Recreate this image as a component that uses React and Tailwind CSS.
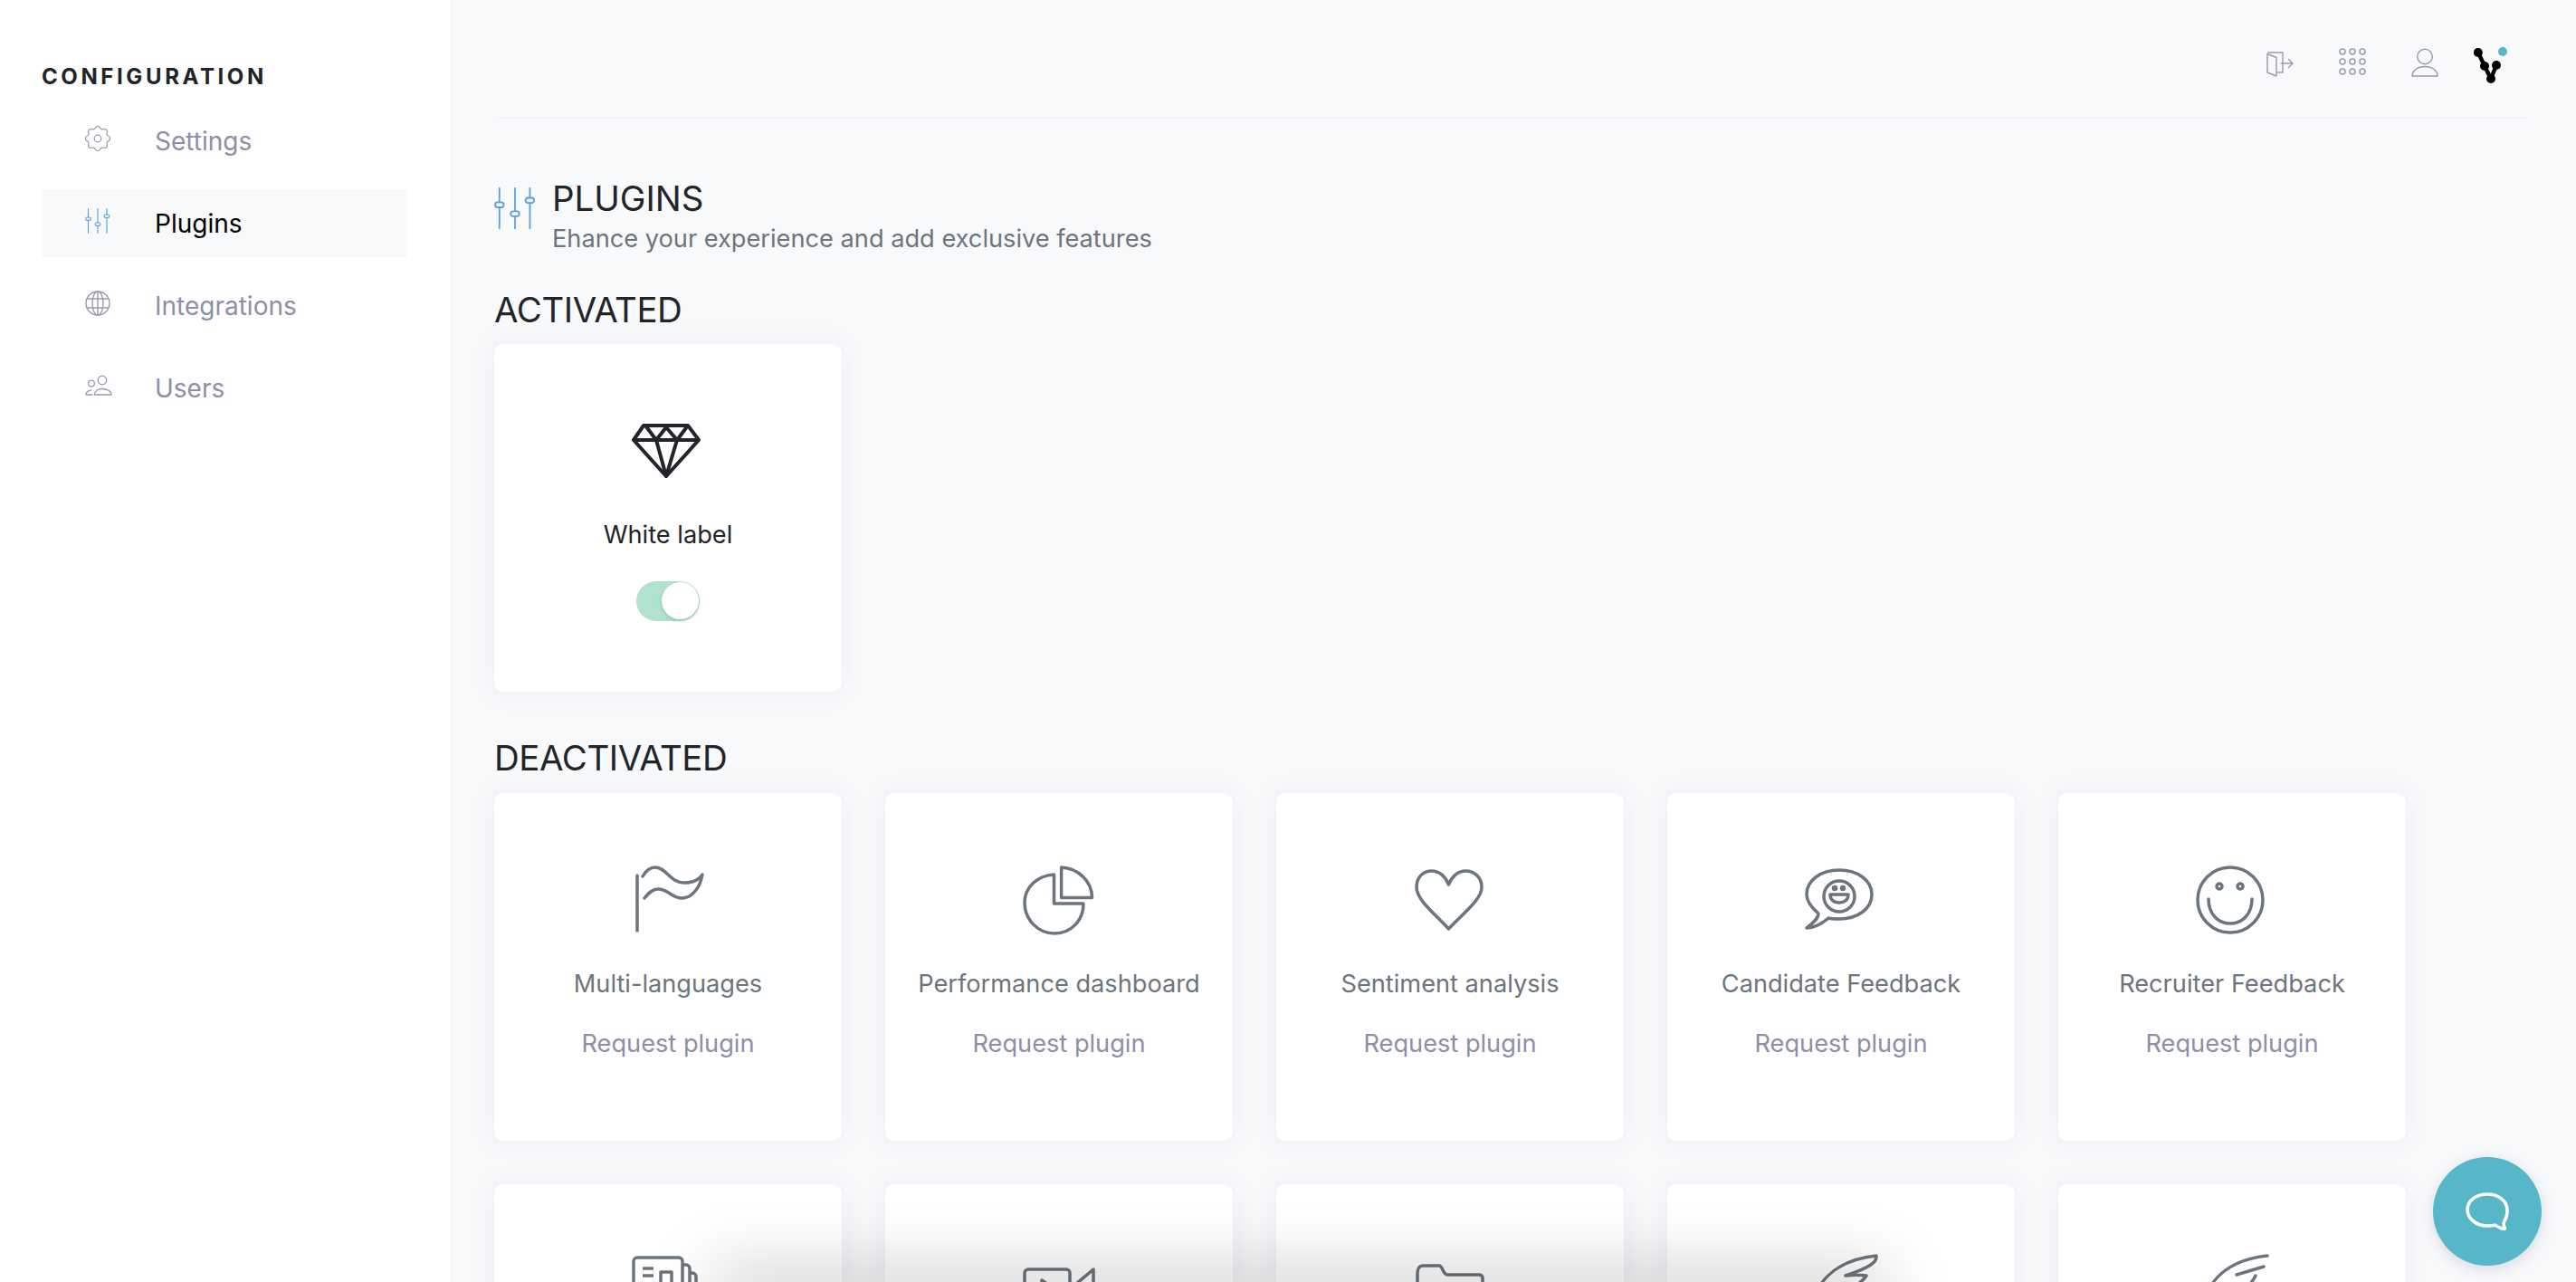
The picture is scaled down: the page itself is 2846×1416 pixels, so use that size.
const gearPath = Array.from({ length: 96 }, (_, i) => {
    const a = (i / 96) * Math.PI * 2;
    const r = 12.4 + 1.3 * Math.cos(8 * a);
    return `${(14 + r * Math.cos(a)).toFixed(2)} ${(14 + r * Math.sin(a)).toFixed(2)}`;
}).join('L');

const Sliders = ({ className }) => (
    <svg viewBox="0 0 28 28" fill="none" stroke="currentColor" strokeWidth="1.1" strokeLinecap="round" className={className}>
        <path d="M3.5 0.5v9.500M3.5 13.500v14M14 0.5v15M14 19.500v8M24 0.5v6.500M24 10.500v17" />
        <rect x="0.6" y="10" width="5.8" height="3.4" rx="1.7" />
        <rect x="11.1" y="16" width="5.8" height="3.4" rx="1.7" />
        <rect x="21.1" y="7" width="5.8" height="3.4" rx="1.7" />
    </svg>
);

const Gear = ({ className }) => (
    <svg viewBox="0 0 28 28" fill="none" stroke="currentColor" strokeWidth="1.2" strokeLinejoin="round" className={className}>
        <circle cx="14" cy="14" r="3.8" />
        <path d={`M${gearPath}z`} />
    </svg>
);

const Globe = ({ className }) => (
    <svg viewBox="0 0 28 28" fill="none" stroke="currentColor" strokeWidth="1.4" className={className}>
        <circle cx="14" cy="14" r="13" />
        <ellipse cx="14" cy="14" rx="6" ry="13" />
        <path d="M14 1v26M2.2 9h23.6M2.2 19h23.6" />
    </svg>
);

const Users = ({ className }) => (
    <svg viewBox="0 0 30 24" fill="none" stroke="currentColor" strokeWidth="1.3" strokeLinejoin="round" className={className}>
        <circle cx="19" cy="6" r="4.8" />
        <circle cx="7" cy="9.5" r="3.4" />
        <path d="M10.500 22c0-4 3.500-6.500 8.500-6.500s10 2.500 10 6.500z" />
        <path d="M8.500 22H1c0-2.500 2.500-5 6-5" />
    </svg>
);

const Door = ({ className }) => (
    <svg viewBox="0 0 30 28" fill="none" stroke="currentColor" strokeWidth="1.4" strokeLinejoin="round" strokeLinecap="round" className={className}>
        <path d="M1 2.500V23l10 4V6.500zM2 1h16v22h-7" />
        <path d="M16 13h13M24.500 8.500 29 13l-4.500 4.500" />
    </svg>
);

const Grid = ({ className }) => (
    <svg viewBox="0 0 30 30" fill="none" stroke="currentColor" strokeWidth="1.5" className={className}>
        <circle cx="4" cy="4" r="3" /><circle cx="15" cy="4" r="3" /><circle cx="26" cy="4" r="3" />
        <circle cx="4" cy="15" r="3" /><circle cx="15" cy="15" r="3" /><circle cx="26" cy="15" r="3" />
        <circle cx="4" cy="26" r="3" /><circle cx="15" cy="26" r="3" /><circle cx="26" cy="26" r="3" />
    </svg>
);

const Person = ({ className }) => (
    <svg viewBox="0 0 30 32" fill="none" stroke="currentColor" strokeWidth="1.4" strokeLinejoin="round" className={className}>
        <circle cx="15" cy="9.500" r="8.300" />
        <path d="M1 31c0-6 6-10.500 14-10.500S29 25 29 31z" />
    </svg>
);

const Logo = ({ className }) => (
    <svg viewBox="0 0 30 39" fill="currentColor" stroke="currentColor" className={className}>
        <path d="M5 5l7 15 7 14M25 19l-6 15" fill="none" strokeWidth="4.500" />
        <circle cx="4.800" cy="5" r="5" stroke="none" />
        <circle cx="12" cy="20" r="5" stroke="none" />
        <circle cx="25" cy="19" r="5" stroke="none" />
        <circle cx="19" cy="34" r="5" stroke="none" />
    </svg>
);

const Diamond = ({ className }) => (
    <svg viewBox="0 0 76 60" fill="none" stroke="currentColor" strokeWidth="4" strokeLinejoin="round" className={className}>
        <path d="M13 2h49l12 16-36 40L2 18z" />
        <path d="M2 18h72M15 2l12 16L38 4l12 14L62 2M27 18 38 58l12-40" />
    </svg>
);

const Flag = ({ className }) => (
    <svg viewBox="0 0 76 76" fill="none" stroke="currentColor" strokeWidth="3.500" strokeLinecap="round" strokeLinejoin="round" className={className}>
        <path d="M4 11v61" />
        <path d="M10 12c4-7 9-10 14-10 12 0 16 17 32 17 8 0 16-3 20-9-2 12-10 26-23 26-10 0-15-10-26-10-6 0-10 4-15 10" />
    </svg>
);

const Pie = ({ className }) => (
    <svg viewBox="0 0 76 76" fill="none" stroke="currentColor" strokeWidth="3.500" strokeLinejoin="round" className={className}>
        <path d="M32.500 10C14 11 0 24 0 41c0 19 15 34 33 34s32-14 32-33H32.500z" />
        <path d="M40.600 2v33.600h33.900C74.500 17 59 3 40.600 2z" />
    </svg>
);

const Heart = ({ className }) => (
    <svg viewBox="0 0 76 68" fill="none" stroke="currentColor" strokeWidth="3.500" strokeLinejoin="round" className={className}>
        <path d="M36.500 66C22 50 1 34 1 20 1 9 8 2 18 2c8 0 15 6 18.500 15C40 8 47 2 55 2c10 0 18 7 18 18 0 14-22 30-36.500 46z" />
    </svg>
);

const ChatSmile = ({ className }) => (
    <svg viewBox="0 0 76 68" fill="none" stroke="currentColor" strokeWidth="3.500" strokeLinejoin="round" strokeLinecap="round" className={className}>
        <path d="M13 49C6 43 0 36 0 28 0 12 16 1 36 1s36 11 36 27-16 27-36 27c-5 0-9 0-12-1-7 6-16 11-24 11 6-5 13-10 13-16z" />
        <circle cx="36" cy="30" r="17" />
        <circle cx="31" cy="21" r="1.500" fill="currentColor" />
        <circle cx="40" cy="21" r="1.500" fill="currentColor" />
        <path d="M26 28h20c0 6-4 9-10 9s-10-3-10-9z" />
    </svg>
);

const Smile = ({ className }) => (
    <svg viewBox="0 0 76 76" fill="none" stroke="currentColor" strokeWidth="3.500" strokeLinecap="round" className={className}>
        <circle cx="36" cy="38" r="36" />
        <circle cx="24" cy="23" r="3" />
        <circle cx="47" cy="23" r="3" />
        <path d="M12 37c0 16 10 27 24 27s24-11 24-27" />
    </svg>
);

const News = ({ className }) => (
    <svg viewBox="0 0 76 76" fill="none" stroke="currentColor" strokeWidth="3.500" strokeLinejoin="round" className={className}>
        <path d="M0 5c0-2 2-4 4-4h46c2 0 4 2 4 4v71H4c-2 0-4-2-4-4z" />
        <path d="M10 13h12M10 21h12M30 17h12v40H30z" />
        <path d="M54 9h4c2 0 4 2 4 4v63M62 18h3c2 0 4 2 4 4v54" />
    </svg>
);

const Video = ({ className }) => (
    <svg viewBox="0 0 76 76" fill="none" stroke="currentColor" strokeWidth="3.500" strokeLinejoin="round" className={className}>
        <rect x="0" y="14" width="50" height="50" rx="4" />
        <path d="M50 36 76 14v50L50 46M19 26l18 13-18 13z" />
    </svg>
);

const Folder = ({ className }) => (
    <svg viewBox="0 0 76 60" fill="none" stroke="currentColor" strokeWidth="3.500" strokeLinejoin="round" className={className}>
        <path d="M2 10c0-4 2-8 6-8h18c4 0 4 10 9 10h35c3 0 4 2 4 4v40c0 2-2 3-4 3H6c-2 0-4-2-4-4zM2 22h72" />
    </svg>
);

const FeatherOne = ({ className }) => (
    <svg viewBox="0 0 76 76" fill="none" stroke="currentColor" strokeWidth="3.500" strokeLinecap="round" strokeLinejoin="round" className={className}>
        <path d="M2 76C4 30 30 4 77-1c1 7-7 13-34 22 8-1 16-1 23 0-4 6-8 9-14 12" />
    </svg>
);

const FeatherTwo = ({ className }) => (
    <svg viewBox="0 0 76 76" fill="none" stroke="currentColor" strokeWidth="3.500" strokeLinecap="round" strokeLinejoin="round" className={className}>
        <path d="M2 76C4 30 30 4 77-1" />
        <path d="M43 20 73 11M64 21c-4 8-8 12-14 16" />
    </svg>
);

const Chat = ({ className }) => (
    <svg viewBox="0 0 48 42" fill="none" stroke="currentColor" strokeWidth="3.600" strokeLinejoin="round" className={className}>
        <path d="M24 2C12 2 2 9 2 19s10 18 22 18c3 0 6 0 8-1l9 4.500c2 1 3-.5 2-2-1-2-1-5 0-7 2-3 3-7 3-11.500C46 9 36 2 24 2z" />
    </svg>
);

const navItems = [
    { label: 'Settings', icon: Gear, size: 'w-[28px] h-[28px]' },
    { label: 'Plugins', icon: Sliders, size: 'w-[28px] h-[28px]', active: true },
    { label: 'Integrations', icon: Globe, size: 'w-[28px] h-[28px]' },
    { label: 'Users', icon: Users, size: 'w-[30px] h-[24px]' },
];

const deactivated = [
    { label: 'Multi-languages', icon: Flag },
    { label: 'Performance dashboard', icon: Pie },
    { label: 'Sentiment analysis', icon: Heart },
    { label: 'Candidate Feedback', icon: ChatSmile },
    { label: 'Recruiter Feedback', icon: Smile },
    { icon: News },
    { icon: Video },
    { icon: Folder },
    { icon: FeatherOne },
    { icon: FeatherTwo },
];

function PluginCard({ plugin }) {
    const Icon = plugin.icon;
    return (
        <div className="w-[384px] h-[384px] rounded-[10px] bg-white shadow-[0_0_30px_rgba(40,50,80,0.06)] flex flex-col items-center pt-[78px]">
            <div className="h-[80px] flex items-center justify-center">
                <Icon className="w-[76px] h-[76px] overflow-visible text-[#6c757d]" />
            </div>
            {plugin.label && (
                <>
                    <div className="mt-[32px] text-[27.2px] leading-[42px] text-[#6c757d]">{plugin.label}</div>
                    <div className="mt-[24px] text-[27.2px] leading-[42px] text-[#8e8ea8]">Request plugin</div>
                </>
            )}
        </div>
    );
}

export default function App() {
    return (
        <div className="relative flex h-screen overflow-hidden bg-[#f8f9fb] font-['Inter',sans-serif]">
            <aside className="w-[498px] shrink-0 bg-white shadow-[0_0_4px_rgba(40,50,80,0.06)] pl-[46px] pt-[69px]">
                <div className="text-[24px] leading-[32px] font-bold tracking-[3.6px] text-[#212529]">CONFIGURATION</div>
                <nav className="mt-[17px] flex flex-col gap-[16px] w-[404px]">
                    {navItems.map(item => {
                        const Icon = item.icon;
                        return (
                            <div key={item.label} className={`h-[75px] flex items-center pl-[48px] ${item.active ? 'bg-[#f8f9fb]' : ''}`}>
                                <div className="w-[28px] -mt-[6px]">
                                    <Icon className={`${item.size} ${item.active ? 'text-[#5a9fdc]' : 'text-[#9a9ab0]'}`} />
                                </div>
                                <span className={`ml-[49px] text-[28px] ${item.active ? 'text-black' : 'text-[#8e8ea8]'}`}>{item.label}</span>
                            </div>
                        );
                    })}
                </nav>
            </aside>

            <main className="flex-1 min-w-0 pl-[48px] pr-[54px]">
                <header className="h-[131px] ml-[4px] border-b-2 border-[#f1f2f7] flex items-start justify-end pr-[29px] pt-[53px]">
                    <Door className="w-[30px] h-[28px] mt-[4px] text-[#9a9ab0]" />
                    <Grid className="w-[30px] h-[30px] ml-[50px] text-[#9a9ab0]" />
                    <Person className="w-[30px] h-[32px] ml-[50px] text-[#9a9ab0]" />
                    <div className="relative ml-[39px]">
                        <Logo className="w-[30px] h-[39px] text-black" />
                        <span className="absolute top-[-1px] -right-[7px] w-[10px] h-[10px] rounded-full bg-[#57b7c9]" />
                    </div>
                </header>

                <div className="mt-[64px] flex items-start">
                    <Sliders className="w-[46px] h-[48px] text-[#5a9fdc] mt-[11px]" />
                    <div className="ml-[18px]">
                        <h1 className="text-[38.4px] leading-[48px] text-[#212529]">PLUGINS</h1>
                        <p className="text-[27.2px] leading-[42px] text-[#6c757d]">Ehance your experience and add exclusive features</p>
                    </div>
                </div>

                <h2 className="mt-[34px] text-[38.4px] leading-[46px] tracking-[-0.4px] text-[#212529]">ACTIVATED</h2>
                <div className="mt-[15px]">
                    <div className="w-[384px] h-[384px] rounded-[10px] bg-white shadow-[0_0_30px_rgba(40,50,80,0.06)] flex flex-col items-center pt-[78px]">
                        <div className="h-[80px] flex items-center justify-center">
                            <Diamond className="w-[76px] h-[60px] -ml-[4px] text-[#212529]" />
                        </div>
                        <div className="mt-[32px] text-[27.2px] leading-[42px] text-[#212529]">White label</div>
                        <div className="mt-[30px] w-[70px] h-[44px] rounded-full bg-[#b0e3cd] relative">
                            <span className="absolute right-[1px] top-[1px] w-[41px] h-[41px] rounded-full bg-white shadow-[0_2px_4px_rgba(0,0,0,0.15)]" />
                        </div>
                    </div>
                </div>

                <h2 className="mt-[50px] text-[38.4px] leading-[46px] tracking-[-0.4px] text-[#212529]">DEACTIVATED</h2>
                <div className="mt-[16px] grid grid-cols-[repeat(5,384px)] gap-[48px]">
                    {deactivated.map((plugin, i) => <PluginCard key={i} plugin={plugin} />)}
                </div>
            </main>

            <div className="absolute left-[800px] top-[1416px] w-[1270px] h-[20px] rounded-full shadow-[0_0_70px_20px_rgba(0,0,0,0.17)]" />

            <div className="absolute right-[38px] bottom-[18px] w-[120px] h-[120px] rounded-full bg-[#57b7c9] shadow-[0_4px_16px_rgba(40,50,80,0.15)] flex items-center justify-center">
                <Chat className="w-[48px] h-[42px] text-white" />
            </div>
        </div>
    );
}
